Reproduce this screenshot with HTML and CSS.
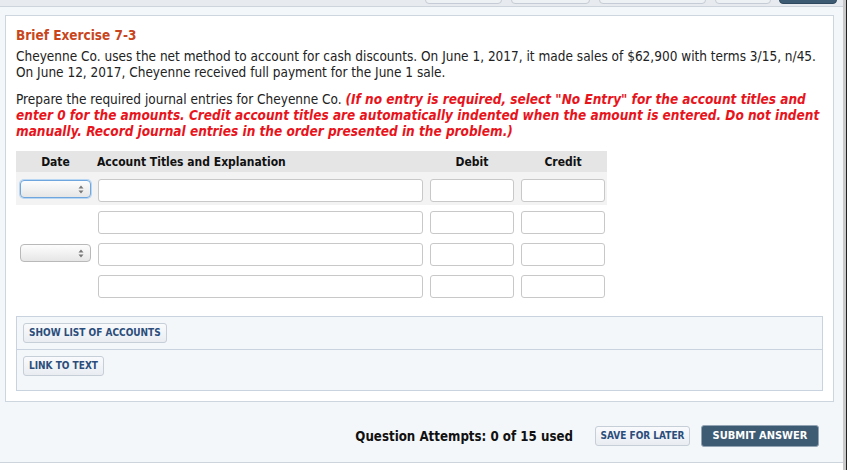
FILE: index.html
```html
<!DOCTYPE html>
<html>
<head>
<meta charset="utf-8">
<link rel="stylesheet" href="styles.css">
</head>
<body>
<div class="window">
  <div class="app">
    <div class="topbar">
      <span class="tb b1"></span>
      <span class="tb b2"></span>
      <span class="tb b3"></span>
      <span class="tb b4"></span>
      <span class="tb b5"></span>
    </div>
    <div class="panel">
      <h1 class="title">Brief Exercise 7-3</h1>
      <p class="text">Cheyenne Co. uses the net method to account for cash discounts. On June 1, 2017, it made sales of $62,900 with terms 3/15, n/45. On June 12, 2017, Cheyenne received full payment for the June 1 sale.</p>
      <p class="text">Prepare the required journal entries for Cheyenne Co. <em class="note">(If no entry is required, select "No Entry" for the account titles and enter 0 for the amounts. Credit account titles are automatically indented when the amount is entered. Do not indent manually. Record journal entries in the order presented in the problem.)</em></p>

      <div class="journal">
        <div class="jrow head">
          <div class="c-date">Date</div>
          <div class="c-acct">Account Titles and Explanation</div>
          <div class="c-num">Debit</div>
          <div class="c-num">Credit</div>
        </div>
        <div class="jrow first">
          <div class="sel focus"><svg width="6" height="9" viewBox="0 0 6 9"><path d="M3 0.5 L5.5 3.5 H0.5 Z M3 8.5 L5.5 5.5 H0.5 Z" fill="#777"/></svg></div>
          <div class="inp"></div>
          <div class="inp"></div>
          <div class="inp"></div>
        </div>
        <div class="jrow">
          <div class="empty"></div>
          <div class="inp"></div>
          <div class="inp"></div>
          <div class="inp"></div>
        </div>
        <div class="jrow">
          <div class="sel"><svg width="6" height="9" viewBox="0 0 6 9"><path d="M3 0.5 L5.5 3.5 H0.5 Z M3 8.5 L5.5 5.5 H0.5 Z" fill="#777"/></svg></div>
          <div class="inp"></div>
          <div class="inp"></div>
          <div class="inp"></div>
        </div>
        <div class="jrow">
          <div class="empty"></div>
          <div class="inp"></div>
          <div class="inp"></div>
          <div class="inp"></div>
        </div>
      </div>

      <div class="tools">
        <div class="tool-sec"><span class="btn">SHOW LIST OF ACCOUNTS</span></div>
        <div class="tool-sec last"><span class="btn">LINK TO TEXT</span></div>
      </div>
    </div>

    <div class="footer">
      <span class="attempts">Question Attempts: 0 of 15 used</span>
      <span class="btn save">SAVE FOR LATER</span>
      <span class="btn submit">SUBMIT ANSWER</span>
    </div>
    <div class="bottom"></div>
  </div>
  <div class="edge"></div>
</div>
</body>
</html>
```
FILE: styles.css
```css
html, body {
  margin: 0;
  padding: 0;
  background: #ffffff;
}
body {
  font-family: "DejaVu Sans Condensed", "DejaVu Sans", Verdana, sans-serif;
  font-stretch: condensed;
  color: #222;
}
.window {
  display: flex;
  width: 849px;
  height: 470px;
  overflow: hidden;
}
.app {
  width: 843px;
  background: #f4f7fa;
  display: flex;
  flex-direction: column;
}
.edge {
  width: 6px;
  box-sizing: border-box;
  background: #fff;
  border-left: 3px solid #c9c9c9;
  border-right: 2px solid #fff;
}
.edge::after {
  content: "";
  display: block;
  width: 1px;
  height: 100%;
  background: #222;
}
.topbar {
  height: 6px;
  flex: none;
  background: #e7ebef;
  border-bottom: 1px solid #cdd4dc;
  display: flex;
  align-items: flex-end;
  padding-left: 425px;
  overflow: hidden;
}
.tb {
  display: block;
  height: 20px;
  margin-bottom: 2px;
  box-sizing: border-box;
  border: 1px solid #c5ccd5;
  border-radius: 4px;
  background: #eef1f4;
  flex: none;
}
.b1 { width: 77px; }
.b2 { width: 79px; margin-left: 9px; }
.b3 { width: 107px; margin-left: 9px; }
.b4 { width: 56px; margin-left: 9px; }
.b5 { width: 58px; margin-left: 8px; background: #3e5b74; border-color: #2f4a60; }

.panel {
  flex: none;
  margin: 8px 0 0 5px;
  width: 829px;
  box-sizing: border-box;
  background: #fff;
  border: 1px solid #cdd5df;
  padding: 11px 10px 10px 10px;
}
.title {
  margin: 0;
  font-size: 13.5px;
  line-height: 16px;
  font-weight: bold;
  color: #c9461d;
}
.text {
  margin: 5px 0 0;
  font-size: 13.5px;
  line-height: 16px;
}
.text + .text {
  margin-top: 11px;
}
.note {
  color: #e8141c;
  font-weight: bold;
  font-style: italic;
}

.journal {
  margin-top: 12px;
  width: 591px;
}
.jrow {
  display: grid;
  grid-template-columns: 71px 325px 84px 84px;
  column-gap: 7px;
  padding: 0 3px 0 4px;
  margin-top: 9px;
}
.jrow.head {
  margin-top: 0;
  height: 21px;
  align-items: center;
  background: #e5e5e5;
  font-size: 12px;
  font-weight: bold;
  color: #111;
}
.jrow.first {
  margin-top: 0;
  background: #f3f3f3;
  padding-top: 7px;
  padding-bottom: 3px;
}
.jrow.first + .jrow {
  margin-top: 6px;
}
.c-date { text-align: center; margin-left: -4px; width: 79px; }
.c-acct { margin-left: -1px; }
.c-num { text-align: center; }

.inp {
  height: 23px;
  box-sizing: border-box;
  border: 1px solid #c8c8c8;
  border-radius: 3px;
  background: #fff;
}
.sel {
  margin-top: 1px;
  height: 18px;
  box-sizing: border-box;
  border: 1px solid #b9b9b9;
  border-radius: 4px;
  background: linear-gradient(#fdfdfd, #e6e6e6);
  display: flex;
  align-items: center;
  justify-content: flex-end;
  padding-right: 6px;
}
.sel.focus {
  border-color: #6ea6dd;
  box-shadow: 0 0 0 1px #b9d6f2;
}

.tools {
  margin-top: 18px;
  border: 1px solid #c9d3df;
  background: #f4f7fa;
}
.tool-sec {
  height: 20px;
  padding: 6px 6px 6px;
  border-bottom: 1px solid #c9d3df;
  display: flex;
}
.tool-sec.last {
  border-bottom: none;
  padding-bottom: 14px;
}
.btn {
  display: inline-block;
  box-sizing: border-box;
  height: 20px;
  line-height: 18px;
  padding: 0 5px;
  border: 1px solid #c6ced8;
  border-radius: 3px;
  background: linear-gradient(#f9fafc, #e9edf2);
  color: #2b4d7b;
  font-size: 10px;
  font-weight: bold;
  white-space: nowrap;
}

.footer {
  flex: none;
  height: 60px;
  box-sizing: border-box;
  display: flex;
  align-items: center;
  justify-content: flex-end;
  padding-right: 24px;
  padding-top: 8px;
}
.attempts {
  font-size: 13.2px;
  font-weight: bold;
  color: #111;
  margin-right: 22px;
}
.btn.save {
  width: 95px;
  text-align: center;
  padding: 0;
}
.btn.submit {
  margin-left: 11px;
  width: 118px;
  height: 22px;
  line-height: 20px;
  text-align: center;
  padding: 0;
  font-size: 11px;
  background: #3e5b74;
  border-color: #93a5b5;
  color: #fff;
}
.bottom {
  flex: 1;
  border-top: 1px solid #cdd4dc;
  background: #fff;
}
```
